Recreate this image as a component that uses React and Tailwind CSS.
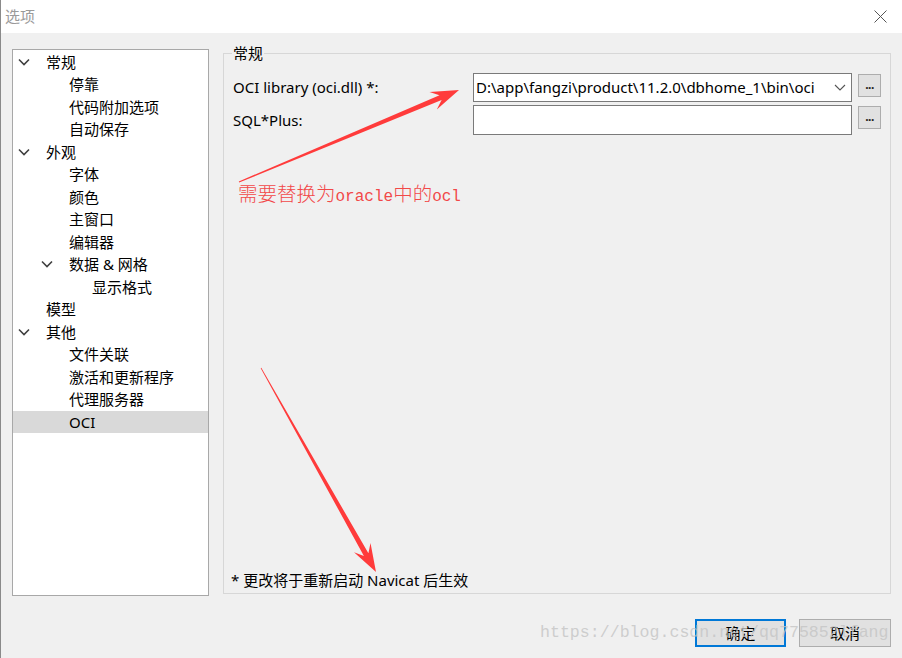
const tree = [
  { label: "常规", level: 0, open: true },
  { label: "停靠", level: 1 },
  { label: "代码附加选项", level: 1 },
  { label: "自动保存", level: 1 },
  { label: "外观", level: 0, open: true },
  { label: "字体", level: 1 },
  { label: "颜色", level: 1 },
  { label: "主窗口", level: 1 },
  { label: "编辑器", level: 1 },
  { label: "数据 & 网格", level: 1, open: true },
  { label: "显示格式", level: 2 },
  { label: "模型", level: 0 },
  { label: "其他", level: 0, open: true },
  { label: "文件关联", level: 1 },
  { label: "激活和更新程序", level: 1 },
  { label: "代理服务器", level: 1 },
  { label: "OCI", level: 1, selected: true },
];

const indent = ["w-0", "w-[23px]", "w-[46px]"];

// tapered arrow like the screenshot tool draws
function arrowPoints(x1, y1, x2, y2, tail, shaft, neck, head, wing) {
  const dx = x2 - x1;
  const dy = y2 - y1;
  const len = Math.hypot(dx, dy);
  const ux = dx / len;
  const uy = dy / len;
  const nx = -uy;
  const ny = ux;
  const p = (d, w) => [x2 - ux * d + nx * w, y2 - uy * d + ny * w];
  const pts = [
    [x1 + nx * tail, y1 + ny * tail],
    p(neck, shaft),
    p(head, wing),
    [x2, y2],
    p(head, -wing),
    p(neck, -shaft),
    [x1 - nx * tail, y1 - ny * tail],
  ];
  return pts.map((q) => q[0].toFixed(1) + "," + q[1].toFixed(1)).join(" ");
}

function Chevron() {
  return (
    <svg width="12" height="8" viewBox="0 0 12 8">
      <path d="M1 1.5 L6 6.5 L11 1.5" fill="none" stroke="#404040" strokeWidth="1.6" />
    </svg>
  );
}

function DotsButton() {
  return (
    <button className="w-[23px] h-[23px] ml-[6px] bg-[#e1e1e1] border border-[#adadad] flex items-end justify-center pb-[5px]">
      <span className="text-[12px] leading-none tracking-[-0.5px] font-bold text-[#222]">...</span>
    </button>
  );
}

export default function App() {
  return (
    <div className="relative w-[902px] h-[658px] bg-[#f0f0f0] border-l border-[#8a8a8a] font-['Noto_Sans','Noto_Sans_CJK_SC',sans-serif] text-[15px] text-black overflow-hidden">
      {/* title bar */}
      <div className="h-[33px] bg-white flex items-center justify-between pl-[4px] pr-[15px]">
        <span className="text-[#9a9a9a]">选项</span>
        <svg width="13" height="13" viewBox="0 0 13 13">
          <path d="M0.5 0.5 L12.5 12.5 M12.5 0.5 L0.5 12.5" stroke="#555" strokeWidth="1" />
        </svg>
      </div>

      <div className="flex px-[11px] pt-[16px]">
        {/* tree */}
        <div className="w-[197px] h-[547px] bg-white border border-[#a8a8a8] pt-[0.5px]">
          {tree.map((item) => (
            <div
              key={item.label}
              className={
                "h-[22.5px] flex items-center " + (item.selected ? "bg-[#d9d9d9]" : "")
              }
            >
              <div className={indent[item.level] + " shrink-0"} />
              <div className="w-[33px] shrink-0 pl-[5px] flex items-center">
                {item.open && <Chevron />}
              </div>
              <span className="whitespace-pre">{item.label}</span>
            </div>
          ))}
        </div>

        {/* group box */}
        <div className="relative ml-[14px] mt-[4px] w-[668px] h-[541px] border border-[#d7d7d7] flex flex-col">
          <span className="absolute -top-[12px] left-[8px] px-[1px] bg-[#f0f0f0]">常规</span>

          <div className="pt-[19px] pl-[9px] flex flex-col gap-[3px]">
            <div className="flex items-start">
              <span className="w-[240px] h-[29px] flex items-center">OCI library (oci.dll) *:</span>
              <div className="w-[379px] h-[29px] bg-white border border-[#7a7a7a] flex items-center pl-[2px] pr-[5px]">
                <span className="flex-1 overflow-hidden whitespace-nowrap">
                  D:\app\fangzi\product\11.2.0\dbhome_1\bin\oci
                </span>
                <svg width="12" height="7" viewBox="0 0 12 7" className="ml-[4px] shrink-0">
                  <path d="M1 1 L6 6 L11 1" fill="none" stroke="#555" strokeWidth="1.1" />
                </svg>
              </div>
              <div className="mt-[1px]">
                <DotsButton />
              </div>
            </div>
            <div className="flex items-start">
              <span className="w-[240px] h-[30px] flex items-center">SQL*Plus:</span>
              <div className="w-[379px] h-[30px] bg-white border border-[#7a7a7a]" />
              <div className="mt-[1px]">
                <DotsButton />
              </div>
            </div>
          </div>

          <div className="mt-[46px] pl-[14px] text-[#f24848] font-['Liberation_Mono','Noto_Sans_CJK_SC',monospace] leading-[24px]">
            <span className="text-[19.5px] font-['Noto_Sans_CJK_SC',serif] font-light">需要替换为</span>
            <span className="text-[16px]">oracle</span>
            <span className="text-[19.5px] font-['Noto_Sans_CJK_SC',serif] font-light">中的</span>
            <span className="text-[16px]">ocl</span>
          </div>

          <div className="mt-auto pl-[7px] pb-[3px] leading-[20px]">
            * 更改将于重新启动 Navicat 后生效
          </div>
        </div>
      </div>

      {/* dialog buttons */}
      <div className="flex justify-end gap-[13px] pr-[11px] mt-[23px]">
        <button className="w-[91px] h-[28px] bg-[#e1e1e1] border-2 border-[#0078d7] flex items-center justify-center">
          确定
        </button>
        <button className="w-[92px] h-[28px] bg-[#e1e1e1] border border-[#adadad] flex items-center justify-center">
          取消
        </button>
      </div>

      {/* watermark */}
      <div className="absolute left-[539px] top-[621px] text-[16.6px] leading-[24px] text-[#c4c4c4]/80 font-['Liberation_Mono',monospace] pointer-events-none">
        https://blog.csdn.net/qq775852lfang
      </div>

      {/* annotation arrows */}
      <svg className="absolute inset-0 pointer-events-none" width="902" height="658" viewBox="0 0 902 658">
        <polygon points={arrowPoints(238, 182, 458, 90, 0.5, 2.6, 20, 28, 9.5)} fill="#ff3b3b" />
        <polygon points={arrowPoints(260, 368, 375, 572, 0.4, 2.6, 20, 28, 9.5)} fill="#ff3b3b" />
      </svg>
    </div>
  );
}
